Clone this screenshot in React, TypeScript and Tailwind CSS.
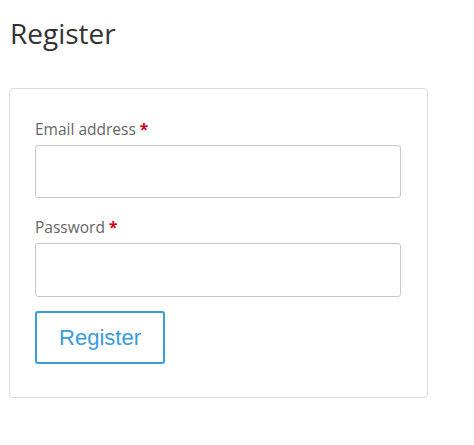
export default function App() {
  return (
    <div className="min-h-screen bg-white pl-[9px] pt-[14px]" style={{ fontFamily: '"Open Sans", sans-serif' }}>
      <h1 className="pl-[1px] text-[28px] leading-[38px] text-[#333]">Register</h1>
      <div className="mt-[36px] w-[419px] rounded-[4px] border border-[#dcdcdc] pl-[25px] pr-[26px] pt-[28px] pb-[33px]">
        <label className="block text-[15.5px] leading-[24px] text-[#666]">
          Email address <span className="font-bold text-[#d0021b]">*</span>
        </label>
        <div className="mt-[4px] h-[53px] w-[366px] rounded-[3px] border border-[#c8c8c8] bg-white" />
        <label className="mt-[17px] block text-[15.5px] leading-[24px] text-[#666]">
          Password <span className="font-bold text-[#d0021b]">*</span>
        </label>
        <div className="mt-[4px] h-[54px] w-[366px] rounded-[3px] border border-[#c8c8c8] bg-white" />
        <button
          className="mt-[14px] flex h-[53px] w-[130px] items-center justify-center rounded-[3px] border-2 border-[#3a9bdc] bg-white text-[22px] text-[#3a9bdc]"
          style={{ fontFamily: '"Liberation Sans", Arial, sans-serif' }}
        >
          Register
        </button>
      </div>
    </div>
  );
}
